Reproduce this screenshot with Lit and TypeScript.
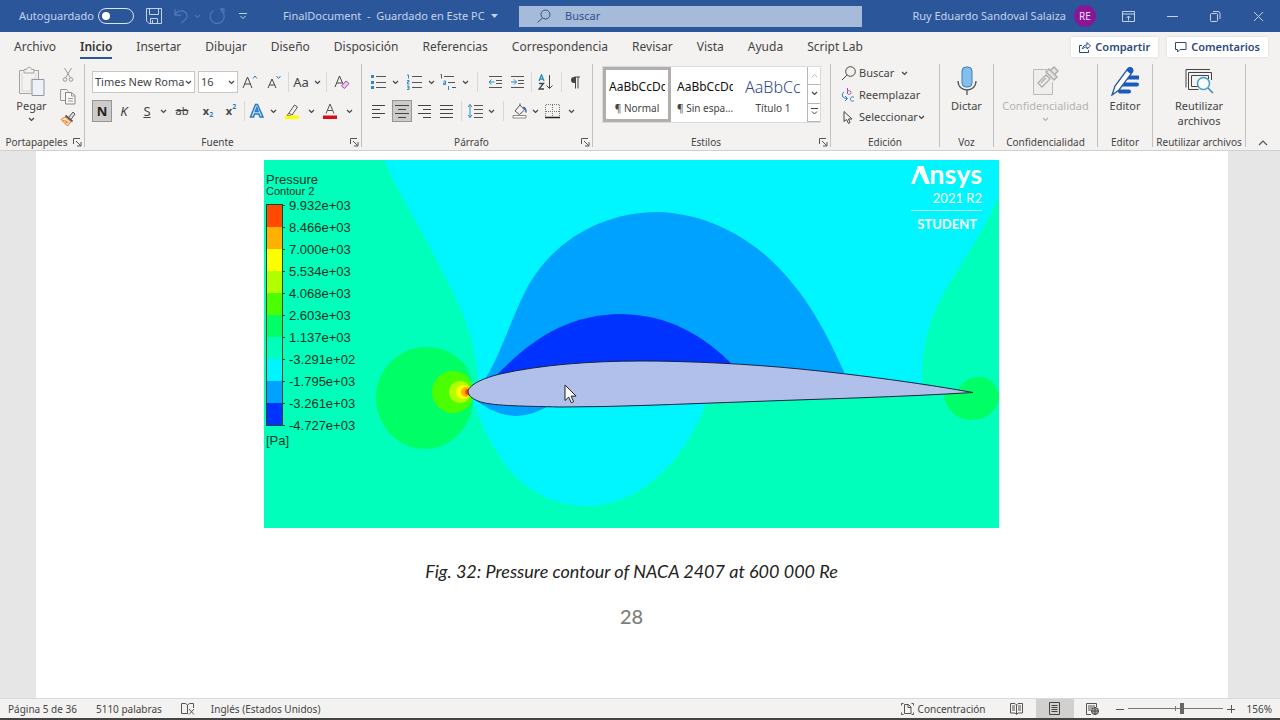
import { LitElement, html, css, svg } from "lit";
import { customElement } from "lit/decorators.js";

const ic = (w: number, h: number, body: unknown) => html`<svg
  width=${w}
  height=${h}
  viewBox="0 0 ${w} ${h}"
  fill="none"
  stroke="currentColor"
  aria-hidden="true"
>
  ${body}
</svg>`;

const chev = () => ic(7, 5, svg`<path d="M1 1l2.5 2.5L6 1" stroke-width="1.2"/>`);
const launcher = () =>
  ic(9, 9, svg`<path d="M.5 6V.5H7M3 3l4.500 4.500M8 4v4H4" stroke="#555"/>`);

const TABS = [
  "Archivo", "Inicio", "Insertar", "Dibujar", "Diseño", "Disposición",
  "Referencias", "Correspondencia", "Revisar", "Vista", "Ayuda", "Script Lab",
];

const LEVELS: [string, string][] = [
  ["9.932e+03", "#ff4b00"],
  ["8.466e+03", "#ffb000"],
  ["7.000e+03", "#ffff00"],
  ["5.534e+03", "#b2ff00"],
  ["4.068e+03", "#4bff00"],
  ["2.603e+03", "#00ff66"],
  ["1.137e+03", "#00ffbb"],
  ["-3.291e+02", "#00f6ff"],
  ["-1.795e+03", "#00a2ff"],
  ["-3.261e+03", "#0033ff"],
  ["-4.727e+03", ""],
];

const lines = (rows: [number, number][]) =>
  svg`${rows.map(([a, b], i) => svg`<path d="M${a} ${2.5 + i * 4}H${b}" stroke="#444"/>`)}`;

@customElement("app-root")
export class AppRoot extends LitElement {
  static styles = css`
    :host {
      display: flex;
      flex-direction: column;
      height: 100vh;
      overflow: hidden;
      font: 11px/16px "Noto Sans", "Open Sans", sans-serif;
      color: #444;
      background: #e6e6e6;
    }
    * { box-sizing: border-box; }
    svg { display: block; flex: none; }
    button, input, select {
      font: inherit;
      color: inherit;
      background: none;
      border: 0;
      margin: 0;
      padding: 0;
    }
    button { display: flex; align-items: center; justify-content: center; white-space: nowrap; }

    .title {
      display: grid;
      grid-template-columns: 519fr 343fr 418fr;
      align-items: center;
      height: 32px;
      flex: none;
      background: #2b579a;
      color: #c3d3ec;
    }
    .quick { display: flex; align-items: center; padding-left: 19px; }
    .auto { display: flex; align-items: center; gap: 4px; }
    .switch {
      appearance: none;
      width: 36px;
      height: 16px;
      border: 1px solid #dbe5f5;
      border-radius: 8px;
      padding: 3px;
    }
    .switch::before { content: ""; display: block; width: 8px; height: 8px; border-radius: 50%; background: #fff; }
    .save { margin-left: 12px; }
    .undo { margin-left: 12px; color: #4f76b3; }
    .undo-more { margin-left: 6px; color: #4f76b3; }
    .redo { margin-left: 8px; color: #4f76b3; }
    .more { margin-left: 14px; }
    .doc-name { margin-left: 36px; gap: 6px; }
    .search {
      display: flex;
      align-items: center;
      gap: 14px;
      height: 21px;
      padding-left: 18px;
      background: #a6bad9;
      color: #2f528c;
    }
    .search input { flex: 1; min-width: 0; outline: 0; }
    .search input::placeholder { color: #2f528c; opacity: 1; }
    .account { display: flex; align-items: center; justify-content: flex-end; padding-right: 16px; }
    .avatar {
      display: grid;
      place-items: center;
      width: 22px;
      height: 22px;
      margin: 0 26px 0 8px;
      border-radius: 50%;
      background: #881798;
      color: #f2dcf5;
      font-size: 10px;
    }
    .win { display: flex; gap: 32px; }

    .tabs {
      display: flex;
      align-items: center;
      height: 29px;
      flex: none;
      padding: 0 12px 0 14px;
      gap: 24px;
      background: #f3f2f1;
      font-size: 12px;
    }
    .tab { height: 25px; border-bottom: 2px solid transparent; border-top: 2px solid transparent; }
    .tab.on { font-weight: 600; color: #333; border-bottom-color: #2b579a; }
    .share { display: flex; gap: 9px; margin-left: auto; }
    .share button {
      height: 20px;
      padding: 0 8px;
      gap: 4px;
      background: #fff;
      box-shadow: 0 0 2px #d5d3d1;
      color: #2b4a80;
      font-size: 11px;
      font-weight: 600;
    }

    .ribbon {
      display: grid;
      grid-template-columns: 85fr 277fr 231fr 238fr 109fr 54fr 104fr 55fr 93fr 34fr;
      height: 90px;
      flex: none;
      padding: 3px 0 0;
      background: #f3f2f1;
      border-bottom: 1px solid #d2d0ce;
    }
    .group {
      display: flex;
      flex-direction: column;
      min-width: 0;
      height: 83px;
      border-right: 1px solid #c3c1bf;
    }
    .body { flex: 1; min-height: 0; }
    .label {
      display: flex;
      align-items: center;
      justify-content: center;
      height: 12px;
      margin-bottom: -1px;
      font-size: 10px;
      white-space: nowrap;
    }
    .label span { flex: 1; text-align: center; }
    .label button { margin-right: 2px; }
    .rows { display: flex; flex-direction: column; gap: 7px; padding-top: 7px; padding-left: 7px; }
    .rows.para { padding-left: 6px; }
    .row { display: flex; align-items: center; height: 22px; }
    .w10 { width: 10px; }
    .w14 { width: 14px; }
    .w20 { width: 20px; }
    .w22 { width: 22px; }
    .w24 { width: 24px; }
    .w28 { width: 28px; }
    .w34 { width: 34px; gap: 5px; }
    .row button { height: 22px; flex: none; font-size: 13px; }
    .sep { width: 6px; height: 20px; display: flex; justify-content: center; flex: none; }
    .sep.thin { width: 4px; }
    .sep.wide { width: 14px; }
    .sep::before { content: ""; width: 1px; background: #dad8d6; }
    .row .boxed { background: #cdcbc9; border: 1px solid #979593; color: #222; font-weight: 700; }
    .row .boxed.centered { margin: 0 2px; }
    .row .small { font-size: 11px; }
    .it { font-style: italic; }
    .un { text-decoration: underline; }
    .st { text-decoration: line-through; }
    .bold { font-weight: 700; }
    .idx { font-size: 7px; line-height: 8px; color: #2b7cc0; }
    .idx.sub { align-self: flex-end; margin-bottom: 3px; }
    .idx.sup { align-self: flex-start; margin-top: 3px; }
    .pick { position: relative; display: flex; align-items: center; height: 22px; background: #fff; border: 1px solid #c8c6c4; }
    .pick select { appearance: none; width: 100%; height: 20px; padding-left: 2px; outline: 0; }
    .pick svg { position: absolute; right: 2px; top: 8px; pointer-events: none; }
    .face { width: 103px; margin-right: 3px; }
    .size { width: 40px; }

    .clip { display: grid; grid-template-columns: 49px 24px; padding-left: 7px; }
    .big { flex-direction: column; justify-content: flex-start; width: 100%; line-height: 15px; }
    .big.off { color: #b5b3b1; }
    .big .pic { height: 34px; display: grid; place-items: center; }
    .big .drop { height: 12px; display: grid; place-items: center; }
    .tools { display: grid; grid-template-rows: 22px 22px 22px; }

    .gallery { display: flex; margin: 2px 9px 0 9px; height: 57px; border: 1px solid #dddbd9; background: #fff; }
    .style {
      flex: 1;
      min-width: 0;
      flex-direction: column;
      align-items: stretch;
      height: 55px;
      border: 3px solid transparent;
      padding: 0 3px;
    }
    .style.on { border-color: #b1afad; }
    .sample { height: 27px; line-height: 30px; overflow: hidden; text-align: left; font-size: 12px; color: #111; }
    .sample.h1 { font-size: 16px; font-weight: 300; color: #2f4a8c; }
    .name { line-height: 19px; font-size: 10px; text-align: center; }
    .scroll { display: grid; grid-template-rows: 1fr 1fr 1fr; width: 13px; }
    .scroll button { border: 1px solid #b9b7b5; border-width: 0 0 1px 1px; }

    .edit { display: grid; grid-template-rows: 22px 22px 22px; margin-top: -2px; padding: 0 0 0 10px; }
    .edit button { justify-content: flex-start; }
    .edit .gl { width: 18px; display: grid; place-items: center start; }
    .edit .far { margin-left: 7px; }
    .collapse { align-self: end; justify-self: center; height: 12px; margin-bottom: 1px; }

    .canvas { flex: 1; min-height: 0; overflow: hidden; padding: 0 52px 0 36px; }
    .page {
      display: flex;
      flex-direction: column;
      align-items: center;
      height: 100%;
      padding: 9px 1px 0 0;
      background: #fff;
    }
    figure { margin: 0; display: flex; flex-direction: column; align-items: center; }
    figcaption {
      font: italic 18px/26px Lato, "Noto Sans", sans-serif;
      color: #222;
      margin-top: 30px;
    }
    .folio { font: 500 20px/26px Lato, "Noto Sans", sans-serif; color: #7f7f7f; margin-top: 19px; }
    .lg { font: 13px "Liberation Sans", Arial, sans-serif; fill: #0b3328; stroke: none; }
    .lg.sm { font-size: 11px; }
    .brand { font-family: Lato, sans-serif; fill: #fff; stroke: none; }
    .brand.xl { font-size: 27px; font-weight: 700; }
    .brand.md { font-size: 13px; }
    .brand.bd { font-size: 13px; font-weight: 700; }

    .status {
      display: flex;
      align-items: center;
      height: 22px;
      flex: none;
      padding: 0 8px;
      background: #f3f2f1;
      border-top: 1px solid #dcdad8;
      border-bottom: 2px solid #444;
      font-size: 10px;
    }
    .words { margin-left: 19px; }
    .proof { margin-left: 19px; }
    .lang { margin-left: 16px; }
    .views { display: flex; align-items: center; margin-left: auto; }
    .focus { gap: 4px; margin-right: 12px; }
    .view { width: 38px; height: 19px; }
    .view.on { background: #d2d0ce; }
    .zoom { display: flex; align-items: center; gap: 4px; margin-left: 4px; }
    .range { appearance: none; width: 95px; height: 12px; background: linear-gradient(#777, #777) center / 100% 1px no-repeat, linear-gradient(#777, #777) 50% 50% / 1px 5px no-repeat; }
    .range::-webkit-slider-thumb { appearance: none; width: 4px; height: 11px; background: #666; }
    .pct { margin-left: 8px; }
  `;

  private cap() {
    return html`<section class="group">
      <div class="body clip">
        <button class="big">
          <span class="pic">${ic(26, 30, svg`
            <path d="M5 4.500H.5v23h12M14 4.500h5.500V13" stroke="#a5a3a1"/><path d="M5 7V3.500h2.500C8 .5 12 .5 12.500 3.500H15V7z" stroke="#a5a3a1" fill="#f3f2f1"/>
            <path d="M3 7v18h9V13h5V7" stroke="#d8d6d4"/><path d="M13 13.500h12v16H13z" fill="#eef2f8" stroke="#8f98a5"/>`)}</span>
          <span>Pegar</span><span class="drop">${chev()}</span>
        </button>
        <div class="tools">
          <button aria-label="Cortar">${ic(12, 16, svg`<path d="M2.500 1l6 10M9.500 1l-6 10" stroke="#999"/><circle cx="3" cy="12.500" r="1.800" stroke="#999"/><circle cx="9" cy="12.500" r="1.800" stroke="#999"/>`)}</button>
          <button aria-label="Copiar">${ic(16, 16, svg`<path d="M5 11.500H.5v-11h6l2 2" stroke="#999"/><path d="M5.500 3.500h6l3.500 3v8.500H5.500z" fill="#f7f7f7" stroke="#888"/><path d="M11.500 3.500v3.500H15M8 9.500h5M8 12h5" stroke="#999"/>`)}</button>
          <button aria-label="Copiar formato">${ic(16, 16, svg`<path d="M8.500 6.500l4.500-5.500 2 2-4 5.500" fill="#ddd" stroke="#555"/><path d="M5.500 4.500l7 6" stroke="#555" stroke-width="1.800"/><path d="M5 6L1 8.500l6.500 6.500 3.500-4.500z" fill="#fde3c8" stroke="#e8761c"/><path d="M3 9.500l4 1M5.500 12l3-1" stroke="#e8761c"/>`)}</button>
        </div>
      </div>
      <div class="label"><span>Portapapeles</span><button aria-label="Opciones de portapapeles">${launcher()}</button></div>
    </section>`;
  }

  private font() {
    const c = () => html`<button class="w10" aria-label="Más">${chev()}</button>`;
    return html`<section class="group">
      <div class="body rows">
        <div class="row">
          <div class="pick face"><select aria-label="Fuente"><option>Times New Roma</option></select>${chev()}</div>
          <div class="pick size"><select aria-label="Tamaño"><option>16</option></select>${chev()}</div>
          <button class="w24" aria-label="Agrandar">${ic(16, 16, svg`<path d="M1 14L5.500 3 10 14M2.700 10h5.600"/><path d="M11 4.500l2-2.500 2 2.500" stroke="#2b7cc0"/>`)}</button>
          <button class="w24" aria-label="Reducir">${ic(14, 16, svg`<path d="M1 14L5 5l4 9M2.500 11h5"/><path d="M9.500 2l2 2.500 2-2.500" stroke="#2b7cc0"/>`)}</button>
          <span class="sep thin"></span>
          <button class="w34">Aa${chev()}</button>
          <span class="sep thin"></span>
          <button class="w28" aria-label="Borrar formato">${ic(16, 16, svg`<path d="M1 13L5.500 2 9 10M3 9h5"/><path d="M7.500 12l4.500-5 3 2.500-4.500 5z" stroke="#a04fb5" fill="#e8cdee"/>`)}</button>
        </div>
        <div class="row">
          <button class="w20 boxed">N</button>
          <button class="w24 it">K</button>
          <button class="w22 un">S</button>${c()}
          <button class="w28 st small">ab</button>
          <button class="w24 bold small">x<span class="idx sub">2</span></button>
          <button class="w22 bold small">x<span class="idx sup">2</span></button>
          <span class="sep thin"></span>
          <button class="w22" aria-label="Efectos de texto">${ic(16, 16, svg`<path d="M1.500 14L6.500 1.500h2L14 14h-3L9.900 11H5.600l-1.100 3zM6.400 8.500h2.800L7.800 4.800z" stroke="#2b7cc0" stroke-width="1.500" fill="#cfe4f7"/>`)}</button>${c()}
          <button class="w28" aria-label="Resaltado">${ic(16, 16, svg`<path d="M5 10l5.500-8 3 2-5.500 8zM5 10l-2 2.500h4" stroke="#555"/><rect x="1" y="12.500" width="14" height="3.500" fill="#ff0" stroke="none"/>`)}</button>${c()}
          <button class="w28" aria-label="Color de fuente">${ic(16, 16, svg`<path d="M4 10.500L8 1l4 9.500M5.400 7.500h5.200" stroke="#555"/><rect x="1" y="12.500" width="14" height="3.500" fill="#d90d16" stroke="none"/>`)}</button>${c()}
        </div>
      </div>
      <div class="label"><span>Fuente</span><button aria-label="Opciones de fuente">${launcher()}</button></div>
    </section>`;
  }

  private para() {
    const c = (w = "w10") => html`<button class=${w} aria-label="Más">${chev()}</button>`;
    const blue = "#2b8ac0";
    return html`<section class="group">
      <div class="body rows para">
        <div class="row">
          <button class="w20" aria-label="Viñetas">${ic(15, 16, svg`<path d="M5 2.500h10M5 8.500h10M5 13.500h10" stroke="#555"/><path d="M0 2.500h3M0 8.500h3M0 13.500h3" stroke=${blue} stroke-width="3"/>`)}</button>${c("w14")}
          <button class="w24" aria-label="Numeración">${ic(15, 16, svg`<path d="M5 2.500h10M5 8.500h10M5 13.500h10" stroke="#555"/><path d="M0 1h1.500v3.500M0 6.500h2v1.500H.5v2h2M0 12h2v3.500H0M.5 13.700h1.500" stroke=${blue}/>`)}</button>${c()}
          <button class="w24" aria-label="Lista multinivel">${ic(20, 16, svg`<path d="M6 2.500h10M10 8.500h7M14 13.500h4" stroke="#555"/><path d="M2.500.5h1v4" stroke="#555"/><path d="M5.500 7h2v3.500h-2V9h2M10.500 12v4" stroke=${blue}/>`)}</button>${c()}
          <span class="sep wide"></span>
          <button class="w22" aria-label="Reducir sangría">${ic(15, 14, svg`<path d="M1 1.500h13M8 5.500h6M8 8.500h6M1 12.500h13" stroke="#555"/><path d="M6.500 7H1M3.500 4.500L1 7l2.500 2.500" stroke=${blue}/>`)}</button>
          <button class="w22" aria-label="Aumentar sangría">${ic(15, 14, svg`<path d="M1 1.500h13M8 5.500h6M8 8.500h6M1 12.500h13" stroke="#555"/><path d="M1 7h5.500M4 4.500L6.500 7 4 9.500" stroke=${blue}/>`)}</button>
          <span class="sep"></span>
          <button class="w24" aria-label="Ordenar">${ic(16, 16, svg`<path d="M1 7L3.500.8 6 7M1.800 5h3.400" stroke=${blue} stroke-width="1.300"/><path d="M1 9.500h4.500L1 15h5" stroke="#444" stroke-width="1.300"/><path d="M11.500 1v13.500M8.500 11.500l3 3 3-3" stroke="#444"/>`)}</button>
          <span class="sep"></span>
          <button class="w22" aria-label="Mostrar todo">${ic(10, 13, svg`<path d="M4.500 1H10M5.500 1v11.500M8 1v11.500" stroke="#444"/><path d="M5.500 1H4a3 3 0 000 6h1.500z" fill="#444" stroke="none"/>`)}</button>
        </div>
        <div class="row">
          <button class="w22" aria-label="Alinear a la izquierda">${ic(14, 16, lines([[0, 13], [0, 8], [0, 13], [0, 8]]))}</button>
          <button class="w20 boxed centered" aria-label="Centrar">${ic(14, 16, lines([[0, 14], [3, 11], [0, 14], [3, 11]]))}</button>
          <button class="w22" aria-label="Alinear a la derecha">${ic(14, 16, lines([[0, 13], [5, 13], [0, 13], [5, 13]]))}</button>
          <button class="w22" aria-label="Justificar">${ic(14, 16, lines([[0, 13], [0, 13], [0, 13], [0, 13]]))}</button>
          <span class="sep"></span>
          <button class="w22" aria-label="Espaciado">${ic(16, 16, svg`<path d="M7 2.500h9M7 6.500h9M7 10.500h9M7 14.500h9" stroke="#555"/><path d="M3 1.500v13M1 4l2-2.500L5 4M1 12l2 2.500L5 12" stroke=${blue}/>`)}</button>${c()}
          <span class="sep wide"></span>
          <button class="w20" aria-label="Sombreado">${ic(16, 16, svg`<path d="M3 8l5-6 4.500 5-5 4.500zM8 2V.5" stroke="#555"/><path d="M11 4.500c2.500 0 3 2 3 5" stroke="#2b6da8" stroke-width="1.500"/><path d="M1 12.500h13v2.500H1z" fill="#fff" stroke="#888"/>`)}</button>${c()}
          <button class="w24" aria-label="Bordes">${ic(15, 15, svg`<path d="M.5 1v12M7.500 1v12M14.500 1v12M1 .5h13M1 7.500h13" stroke="#777" stroke-dasharray="1 1"/><path d="M0 13.500h15" stroke="#222" stroke-width="1.500"/>`)}</button>${c("w14")}
        </div>
      </div>
      <div class="label"><span>Párrafo</span><button aria-label="Opciones de párrafo">${launcher()}</button></div>
    </section>`;
  }

  private rest() {
    return html`<section class="group">
        <div class="body"><div class="gallery">
          <button class="style on"><span class="sample">AaBbCcDc</span><span class="name">¶ Normal</span></button>
          <button class="style"><span class="sample">AaBbCcDc</span><span class="name">¶ Sin espa...</span></button>
          <button class="style"><span class="sample h1">AaBbCc</span><span class="name">Título 1</span></button>
          <div class="scroll">
            <button aria-label="Subir">${ic(7, 5, svg`<path d="M1 4l2.500-2.500L6 4" stroke="#bbb"/>`)}</button>
            <button aria-label="Bajar">${chev()}</button>
            <button aria-label="Más estilos">${ic(7, 8, svg`<path d="M0 .5h7M1 3.500L3.500 6 6 3.500" stroke="#444"/>`)}</button>
          </div>
        </div></div>
        <div class="label"><span>Estilos</span><button aria-label="Opciones de estilos">${launcher()}</button></div>
      </section>
      <section class="group">
        <div class="body edit">
          <button><span class="gl">${ic(16, 15, svg`<circle cx="9.500" cy="5.500" r="4.800" stroke="#444"/><path d="M6 9l-5 5" stroke="#444"/>`)}</span>Buscar<span class="far">${chev()}</span></button>
          <button><span class="gl">${ic(15, 16, svg`<path d="M6.500 1v6M6.500 4.500c1-1.500 3.500-1 3.500 1s-2.500 2.500-3.500 1" stroke="#a04fb5"/><path d="M13 10.500c-1.500-1.500-3.500-.5-3.500 1.500s2 3 3.500 1.500" stroke="#2b7cc0"/><path d="M3 5C0 7 1 11.500 6 11.500M4 9l2.500 2.500L4 14" stroke="#2b7cc0"/>`)}</span>Reemplazar</button>
          <button><span class="gl">${ic(14, 15, svg`<path d="M3 1.500v10l2.500-2 2 4 1.500-1-1.500-3.500h3.500z" stroke="#444"/>`)}</span>Seleccionar<span>${chev()}</span></button>
        </div>
        <div class="label"><span>Edición</span></div>
      </section>
      <section class="group">
        <div class="body"><button class="big"><span class="pic">${ic(20, 30, svg`
          <rect x="5" y="1" width="10" height="20" rx="4" fill="#83beec" stroke="#3f7fb5"/><path d="M1 15c0 12 18 12 18 0M10 24v5" stroke="#555" stroke-width="1.300"/>`)}</span><span>Dictar</span></button></div>
        <div class="label"><span>Voz</span></div>
      </section>
      <section class="group">
        <div class="body"><button class="big off" disabled><span class="pic">${ic(28, 30, svg`
          <path d="M15 3.500H1.500v25h19V16" stroke="#bdbbb9" fill="#efeeed"/>
          <path d="M6 17l8-8 4 4-8 8zM9 17l5-5" stroke="#b0aeac" stroke-width="1.300"/><path d="M14 6l3-3 8 8-3 3zM19 4l3-3 4 4-3 3" stroke="#b0aeac" stroke-width="1.500" fill="#e6e5e4"/>`)}</span><span>Confidencialidad</span><span class="drop">${chev()}</span></button></div>
        <div class="label"><span>Confidencialidad</span></div>
      </section>
      <section class="group">
        <div class="body"><button class="big"><span class="pic">${ic(28, 30, svg`
          <path d="M15 11.500h12M11 18.500h15M9 25.500h9" stroke="#185abd" stroke-width="4" stroke-linecap="round"/>
          <path d="M1 29l3-9L17 2.500c2-2 6 .5 4.500 3.500L8 24z" fill="#fff" stroke="#2458a8" stroke-width="1.300"/><path d="M15.500 4.500l2-2.500c2-2 6 .5 4 3.500l-2 2.500z" fill="#185abd" stroke="none"/>`)}</span><span>Editor</span></button></div>
        <div class="label"><span>Editor</span></div>
      </section>
      <section class="group">
        <div class="body"><button class="big"><span class="pic">${ic(29, 26, svg`
          <path d="M1 19.500V1.500h24" stroke="#444"/><path d="M3.500 21.500V4.500h23V12M6.500 7.500h17V11M6.500 7.500v11h7M3.500 21.500h10" stroke="#444"/>
          <circle cx="18.500" cy="15.500" r="6" fill="#f7fbfd" stroke="#3f9fc5" stroke-width="1.500"/><path d="M23 20l5 5" stroke="#3f87b5" stroke-width="1.500"/>`)}</span><span>Reutilizar</span><span>archivos</span></button></div>
        <div class="label"><span>Reutilizar archivos</span></div>
      </section>
      <button class="collapse" aria-label="Contraer la cinta">${ic(10, 6, svg`<path d="M1 5l4-4 4 4" stroke="#555" stroke-width="1.200"/>`)}</button>`;
  }

  private contour() {
    return svg`<svg width="735" height="368" viewBox="264 160 735 368" role="img" aria-label="Pressure contour">
      <rect x="264" y="160" width="735" height="368" fill="#00ffbb"/>
      <path d="M384 160C398 192 416 220 433 253C458 301 477 336 478 384L922 386C920 345 932 312 949 284C966 256 986 226 999 196V160Z" fill="#00f6ff"/>
      <path d="M470 394C482 428 492 446 507 467C528 493 556 506 588 506C648 504 690 450 707 400Z" fill="#00f6ff"/>
      <path d="M484 381C500 356 510 322 524 294C550 240 604 212 658 212C700 213 744 232 778 267C810 300 828 336 846 376Z" fill="#00a2ff"/>
      <path d="M496 376C530 340 568 314 622 314C668 315 702 334 734 366Z" fill="#0033ff"/>
      <path d="M474 399C490 411 503 416 517 416C530 415 540 411 550 405Z" fill="#00a2ff"/>
      <path d="M472 384C470 362 450 347 426 347C398 347 376 370 376 398C376 426 398 449 425 449C450 449 471 428 473 402Z" fill="#00ff66"/>
      <circle cx="453" cy="392" r="21" fill="#4bff00"/>
      <circle cx="460" cy="392" r="11" fill="#b2ff00"/>
      <circle cx="463" cy="392" r="7" fill="#ffff00"/>
      <circle cx="466" cy="392" r="5" fill="#ffb000"/>
      <circle cx="468" cy="392" r="3" fill="#ff4b00"/>
      <path d="M944 394C945 410 957 420 972 420C988 420 999 409 999 396C998 385 990 377 979 377C971 377 964 381 960 387Z" fill="#00ff66"/>
      <path d="M468 391C470 384 484 378 500 374C540 365 590 361 640 361C690 361 750 364 800 369C860 375 920 383 973 392.500C900 397 820 399 740 402C680 404 620 407 560 407C520 406 490 406 478 401C471 398 468 395 468 391Z" fill="#b1c0eb" stroke="#1a2340"/>
      <path d="M565 385v15.500l3.700-3.400 2.600 5.600 2.300-1-2.500-5.600h5z" fill="#fff" stroke="#222"/>
      <text class="lg" x="266" y="184">Pressure</text>
      <text class="lg sm" x="266" y="195">Contour 2</text>
      ${LEVELS.map(
        ([t, c], i) => svg`${c ? svg`<rect x="267" y=${205 + i * 22} width="15" height="22" fill=${c}/>` : ""}
          <path d="M282 ${205.5 + i * 22}h3" stroke="#15453a"/>
          <text class="lg" x="289" y=${210 + i * 22}>${t}</text>`
      )}
      <path d="M266.500 205v220M282.500 205v220M266 204.500h17M266 425.500h17" stroke="#15453a"/>
      <text class="lg" x="266" y="445">[Pa]</text>
      <path d="M911 184L918 166H921.500L914.500 184ZM919 171L921 166H923.500L930 184H925.500Z" fill="#fff"/>
      <text class="brand xl" x="982" y="184" text-anchor="end">nsys</text>
      <text class="brand md" x="982" y="203" text-anchor="end">2021 R2</text>
      <path d="M911 210.500h71" stroke="#b8fbff"/>
      <text class="brand bd" x="977" y="229" text-anchor="end">STUDENT</text>
    </svg>`;
  }

  render() {
    return html`
      <header class="title">
        <div class="quick">
          <label class="auto">Autoguardado<input class="switch" type="checkbox" role="switch" /></label>
          <button class="save" aria-label="Guardar">${ic(16, 16, svg`<path d="M.5.5h15v15H3l-2.500-2.500zM3.500.5v6h9v-6M4.500 15.500v-5h7v5M6.500 15v-3"/>`)}</button>
          <button class="undo" aria-label="Deshacer">${ic(14, 16, svg`<path d="M1 1v6h6M1 7c3-6 12-5 12 1 0 3-3 5-6 7" stroke-width="1.300"/>`)}</button>
          <button class="undo-more" aria-label="Más">${chev()}</button>
          <button class="redo" aria-label="Repetir">${ic(16, 16, svg`<path d="M11 1h4v4M4.500 2.500a7 7 0 108 .5l2-2" stroke-width="1.300"/>`)}</button>
          <button class="more" aria-label="Personalizar">${ic(8, 8, svg`<path d="M0 1.500h8M1.500 4L4 6.500 6.500 4"/>`)}</button>
          <button class="doc-name">FinalDocument&nbsp; - &nbsp;Guardado en Este PC ${ic(7, 4, svg`<path d="M0 0h7L3.500 4z" fill="currentColor" stroke="none"/>`)}</button>
        </div>
        <label class="search">${ic(14, 14, svg`<circle cx="8.500" cy="5.500" r="4.500"/><path d="M5.500 9L.5 13.500"/>`)}<input type="search" placeholder="Buscar" aria-label="Buscar" /></label>
        <div class="account">
          <span>Ruy Eduardo Sandoval Salaiza</span><span class="avatar">RE</span>
          <div class="win">
            <button aria-label="Opciones de cinta">${ic(13, 11, svg`<path d="M.5.5h12v10H.5zM.5 3h12M6.500 9.500V5M4.500 7l2-2 2 2"/>`)}</button>
            <button aria-label="Minimizar">${ic(11, 11, svg`<path d="M0 5.500h11"/>`)}</button>
            <button aria-label="Restaurar">${ic(11, 11, svg`<rect x=".5" y="2.500" width="7" height="8" rx="1"/><path d="M3 .5h5a2 2 0 012 2V8"/>`)}</button>
            <button aria-label="Cerrar">${ic(11, 11, svg`<path d="M1 1l9 9M10 1l-9 9"/>`)}</button>
          </div>
        </div>
      </header>
      <nav class="tabs">
        ${TABS.map((t) => html`<button class="tab ${t === "Inicio" ? "on" : ""}">${t}</button>`)}
        <div class="share">
          <button>${ic(12, 12, svg`<path d="M3 4.500H.5v7h9V9M3.500 8c.5-3 2-4 4.500-4V1.500L11.500 5 8 8V6c-2 0-3.500.5-4.500 2z"/>`)}Compartir</button>
          <button>${ic(12, 12, svg`<path d="M.5 1.500h10.500v7H5L2.500 11V8.500h-2z"/>`)}Comentarios</button>
        </div>
      </nav>
      <div class="ribbon">${this.cap()}${this.font()}${this.para()}${this.rest()}</div>
      <main class="canvas">
        <article class="page">
          <figure>
            ${this.contour()}
            <figcaption>Fig. 32: Pressure contour of NACA 2407 at 600 000 Re</figcaption>
          </figure>
          <div class="folio">28</div>
        </article>
      </main>
      <footer class="status">
        <span>Página 5 de 36</span><span class="words">5110 palabras</span>
        <button class="proof" aria-label="Revisión">${ic(14, 12, svg`<path d="M6.500 10.500H.5V.5h4l2 1.500v9M6.500 2l2-1.500h4V5M8 6l5 5.500M13 6l-5 5.500" stroke="#555"/>`)}</button>
        <span class="lang">Inglés (Estados Unidos)</span>
        <div class="views">
          <button class="focus">${ic(13, 12, svg`<path d="M2.500.5h-2v2M.5 9.500v2h2M10.500.5h2v2M12.500 9.500v2h-2" stroke="#555"/><path d="M3.500 1.500h4L10 4v6.500H3.500zM7 1.500V4.500h3" stroke="#555"/>`)}Concentración</button>
          <button class="view" aria-label="Modo de lectura">${ic(13, 12, svg`<path d="M6.500 2v9.500M6.500 2L5 .5H.5v9.500H5l1.500 1.500L8 10h4.500V.5H8zM2 3h3M2 5h3M2 7h3M8 3h3M8 5h3M8 7h3" stroke="#555"/>`)}</button>
          <button class="view on" aria-label="Diseño de impresión">${ic(11, 13, svg`<path d="M.5.5h10v12H.5zM2.500 3.500h6M2.500 5.500h6M2.500 7.500h6M2.500 9.500h6" stroke="#444"/>`)}</button>
          <button class="view" aria-label="Diseño web">${ic(13, 12, svg`<path d="M5 11.500H.5V.5h10V4M2 3h7M2 5h5M2 7h3" stroke="#555"/><circle cx="9" cy="8" r="3.500" stroke="#444" fill="#aaa"/><path d="M5.500 8h7M9 4.500v7" stroke="#444"/>`)}</button>
        </div>
        <div class="zoom">
          <button aria-label="Alejar">${ic(8, 8, svg`<path d="M0 4.500h8" stroke="#555"/>`)}</button>
          <input class="range" type="range" min="0" max="100" value="58" aria-label="Zoom" />
          <button aria-label="Acercar">${ic(8, 8, svg`<path d="M0 4.500h8M4.500 0v8" stroke="#555"/>`)}</button>
          <span class="pct">156%</span>
        </div>
      </footer>
    `;
  }
}
